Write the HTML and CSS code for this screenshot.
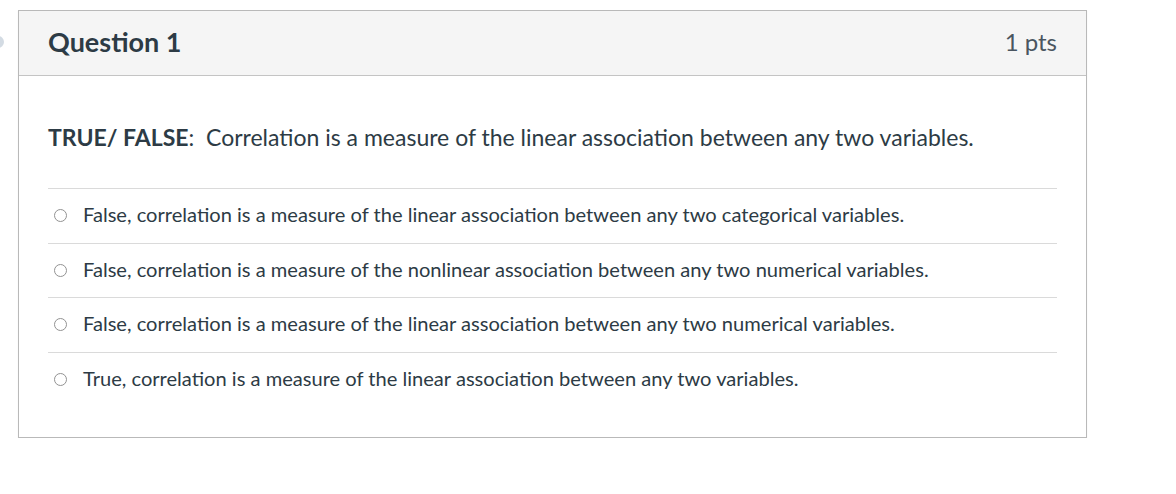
FILE: index.html
```html
<!DOCTYPE html>
<html>
<head>
<meta charset="utf-8">
<link rel="stylesheet" href="styles.css">
</head>
<body>
<span class="edge-dot"></span>
<div class="card">
  <div class="card-header">
    <h2 class="title">Question 1</h2>
    <span class="points">1 pts</span>
  </div>
  <div class="card-body">
    <p class="question"><strong>TRUE/ FALSE</strong>:&nbsp; Correlation is a measure of the linear association between any two variables.</p>
    <ul class="answers">
      <li class="answer"><span class="radio"></span><span>False, correlation is a measure of the linear association between any two categorical variables.</span></li>
      <li class="answer"><span class="radio"></span><span>False, correlation is a measure of the nonlinear association between any two numerical variables.</span></li>
      <li class="answer"><span class="radio"></span><span>False, correlation is a measure of the linear association between any two numerical variables.</span></li>
      <li class="answer"><span class="radio"></span><span>True, correlation is a measure of the linear association between any two variables.</span></li>
    </ul>
  </div>
</div>
</body>
</html>
```
FILE: styles.css
```css
html, body {
  margin: 0;
  background: #ffffff;
}
body {
  padding: 10px 0 0 18px;
  font-family: Lato, "Liberation Sans", sans-serif;
  color: #2d3b45;
  position: relative;
}
.edge-dot {
  position: absolute;
  left: -8px;
  top: 36px;
  width: 12px;
  height: 12px;
  border-radius: 50%;
  background: #d3dbe3;
}
.card {
  width: 1067px;
  border: 1px solid #b9b9b9;
  box-shadow: 0 1px 1px rgba(0,0,0,0.08);
}
.card-header {
  height: 65px;
  box-sizing: border-box;
  padding: 0 29px 3px;
  background: #f5f5f5;
  border-bottom: 1px solid #c4c4c4;
  display: flex;
  align-items: center;
  justify-content: space-between;
}
.title {
  margin: 0;
  font-size: 27px;
  font-weight: 700;
  color: #2d3b45;
}
.points {
  font-size: 24px;
  color: #4a5560;
}
.card-body {
  padding: 45px 29px 31px;
}
.question {
  margin: 0 0 34px;
  font-size: 23px;
  line-height: 33px;
}
.question strong {
  font-weight: 700;
}
.answers {
  list-style: none;
  margin: 0;
  padding: 0;
}
.answer {
  border-top: 1px solid #dadada;
  height: 53.5px;
  box-sizing: content-box;
  display: flex;
  align-items: center;
  font-size: 20.1px;
  color: #2d3b45;
}
.answer > span:last-child {
  padding-bottom: 3px;
}
.radio {
  width: 11px;
  height: 11px;
  border: 1.5px solid #929292;
  border-radius: 50%;
  margin: 0 16px 0 6px;
  flex: none;
}
```
